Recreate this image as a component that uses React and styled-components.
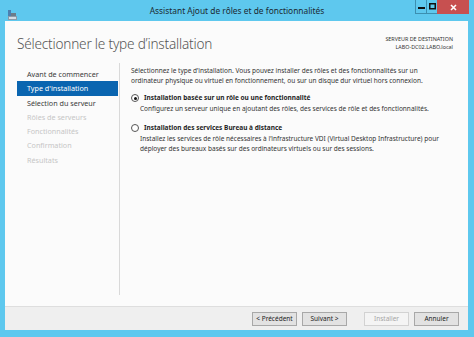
import React from 'react';
import styled, { createGlobalStyle } from 'styled-components';

const GlobalStyle = createGlobalStyle`
  html, body { margin: 0; padding: 0; }
  body {
    width: 474px;
    height: 337px;
    overflow: hidden;
    font-family: "Noto Sans", "Open Sans", sans-serif;
  }
`;

const navItems = [
  { label: 'Avant de commencer', state: 'normal' },
  { label: "Type d'installation", state: 'active' },
  { label: 'Sélection du serveur', state: 'normal' },
  { label: 'Rôles de serveurs', state: 'disabled' },
  { label: 'Fonctionnalités', state: 'disabled' },
  { label: 'Confirmation', state: 'disabled' },
  { label: 'Résultats', state: 'disabled' },
];

function AppIcon() {
  return (
    <svg width="11" height="11" viewBox="0 0 11 11">
      <rect x="1" y="0" width="3" height="6" fill="#4a7fb0" />
      <rect x="1" y="6" width="9" height="4" fill="#8a9aa8" />
      <rect x="2" y="7" width="7" height="2" fill="#d4dde4" />
      <rect x="4" y="3" width="5" height="3" fill="#6c7c88" />
    </svg>
  );
}

function App() {
  return (
    <>
      <GlobalStyle />
      <Frame>
        <TitleBar>
          <IconSlot><AppIcon /></IconSlot>
          <Title>Assistant Ajout de rôles et de fonctionnalités</Title>
          <Controls>
            <CtrlBtn>
              <svg width="7" height="7" viewBox="0 0 7 7"><rect x="0" y="4" width="7" height="2" fill="#111" /></svg>
            </CtrlBtn>
            <CtrlBtn>
              <svg width="7" height="7" viewBox="0 0 7 7"><rect x="0.75" y="0.75" width="5.5" height="5" fill="none" stroke="#111" strokeWidth="1.5" /></svg>
            </CtrlBtn>
            <CloseBtn>
              <svg width="7" height="7" viewBox="0 0 7 7"><path d="M1 1 L6 6 M6 1 L1 6" stroke="#fff" strokeWidth="1.6" /></svg>
            </CloseBtn>
          </Controls>
        </TitleBar>
        <Page>
          <Header>
            <Heading>Sélectionner le type d’installation</Heading>
            <Dest>
              <div>SERVEUR DE DESTINATION</div>
              <div>LABO-DC02.LABO.local</div>
            </Dest>
          </Header>
          <Main>
            <Nav>
              {navItems.map((item) => (
                <NavItem key={item.label} $state={item.state}>{item.label}</NavItem>
              ))}
            </Nav>
            <Content>
              <Intro>
                Sélectionnez le type d’installation. Vous pouvez installer des rôles et des fonctionnalités sur un
                ordinateur physique ou virtuel en fonctionnement, ou sur un disque dur virtuel hors connexion.
              </Intro>
              <Option>
                <OptionHead>
                  <Radio $checked />
                  <OptionTitle>Installation basée sur un rôle ou une fonctionnalité</OptionTitle>
                </OptionHead>
                <OptionDesc>
                  Configurez un serveur unique en ajoutant des rôles, des services de rôle et des fonctionnalités.
                </OptionDesc>
              </Option>
              <Option>
                <OptionHead>
                  <Radio />
                  <OptionTitle>Installation des services Bureau à distance</OptionTitle>
                </OptionHead>
                <OptionDesc>
                  Installez les services de rôle nécessaires à l’infrastructure VDI (Virtual Desktop Infrastructure) pour
                  déployer des bureaux basés sur des ordinateurs virtuels ou sur des sessions.
                </OptionDesc>
              </Option>
            </Content>
          </Main>
          <Footer>
            <Button>&lt; Précédent</Button>
            <Button>Suivant &gt;</Button>
            <Button $disabled $gap>Installer</Button>
            <Button>Annuler</Button>
          </Footer>
        </Page>
      </Frame>
    </>
  );
}

const Frame = styled.div`
  width: 474px;
  height: 337px;
  box-sizing: border-box;
  background: #5ec8ee;
  padding: 0 6px 7px 5px;
  display: flex;
  flex-direction: column;
`;

const TitleBar = styled.div`
  height: 21px;
  flex: none;
  display: flex;
  align-items: flex-start;
`;

const IconSlot = styled.div`
  width: 12px;
  padding: 4px 0 0 2px;
`;

const Title = styled.div`
  flex: 1;
  text-align: center;
  font-size: 8.4px;
  line-height: 21px;
  color: #1c2a33;
  padding-left: 40px;
`;

const Controls = styled.div`
  display: flex;
  height: 14px;
  margin-right: -1px;
`;

const CtrlBtn = styled.div`
  width: 12px;
  height: 14px;
  box-sizing: border-box;
  border: 1px solid #3c8fb0;
  border-top: none;
  margin-right: -1px;
  background: #5ec8ee;
  display: flex;
  align-items: center;
  justify-content: center;
`;

const CloseBtn = styled.div`
  width: 32px;
  height: 14px;
  background: #c75050;
  display: flex;
  align-items: center;
  justify-content: center;
`;

const Page = styled.div`
  flex: 1;
  background: #fbfbfb;
  display: flex;
  flex-direction: column;
  min-height: 0;
`;

const Header = styled.div`
  height: 42px;
  flex: none;
  display: flex;
  justify-content: space-between;
  align-items: flex-start;
  padding: 0 15px 0 12px;
`;

const Heading = styled.h1`
  margin: 0;
  padding-top: 13px;
  font-size: 13.6px;
  font-weight: 300;
  color: #555;
  letter-spacing: -0.2px;
`;

const Dest = styled.div`
  padding-top: 14px;
  text-align: right;
  font-size: 5.4px;
  line-height: 8px;
  color: #333;
`;

const Main = styled.div`
  flex: 1;
  display: flex;
  min-height: 0;
  padding-bottom: 11px;
`;

const Nav = styled.div`
  width: 101px;
  margin-left: 12px;
  padding-top: 4px;
  border-right: 1px solid #d9d9d9;
  padding-right: 1px;
`;

const NavItem = styled.div`
  height: 14.3px;
  line-height: 14.3px;
  padding-left: 10px;
  font-size: 7.2px;
  white-space: nowrap;
  color: ${(p) => (p.$state === 'active' ? '#fff' : p.$state === 'disabled' ? '#c6c6c6' : '#3a3a3a')};
  background: ${(p) => (p.$state === 'active' ? '#0a65b0' : 'transparent')};
`;

const Content = styled.div`
  flex: 1;
  padding: 3px 26px 0 11px;
  color: #333;
  font-size: 6.5px;
  line-height: 10px;
`;

const Intro = styled.p`
  margin: 0 0 7px;
`;

const Option = styled.div`
  margin-bottom: 9px;
`;

const OptionHead = styled.div`
  display: flex;
  align-items: center;
  height: 10px;
  margin-bottom: 1px;
`;

const Radio = styled.span`
  width: 6px;
  height: 6px;
  border: 1px solid #555;
  border-radius: 50%;
  background: #fff;
  margin-right: 5px;
  position: relative;
  &::after {
    content: '';
    display: ${(p) => (p.$checked ? 'block' : 'none')};
    position: absolute;
    left: 1.5px;
    top: 1.5px;
    width: 3px;
    height: 3px;
    border-radius: 50%;
    background: #111;
  }
`;

const OptionTitle = styled.span`
  font-weight: 700;
  color: #1e1e1e;
`;

const OptionDesc = styled.div`
  padding-left: 9px;
`;

const Footer = styled.div`
  height: 24px;
  flex: none;
  background: #efefef;
  border-top: 1px solid #dedede;
  box-sizing: border-box;
  display: flex;
  align-items: center;
  justify-content: flex-end;
  gap: 5px;
  padding-right: 9px;
`;

const Button = styled.div`
  width: 45px;
  height: 14px;
  box-sizing: border-box;
  margin-left: ${(p) => (p.$gap ? '12px' : '0')};
  background: ${(p) => (p.$disabled ? '#f4f4f4' : '#e2e2e2')};
  border: 1px solid ${(p) => (p.$disabled ? '#d2d2d2' : '#a8a8a8')};
  color: ${(p) => (p.$disabled ? '#a6a6a6' : '#222')};
  font-size: 6.5px;
  display: flex;
  align-items: center;
  justify-content: center;
  white-space: nowrap;
`;

export default App;
